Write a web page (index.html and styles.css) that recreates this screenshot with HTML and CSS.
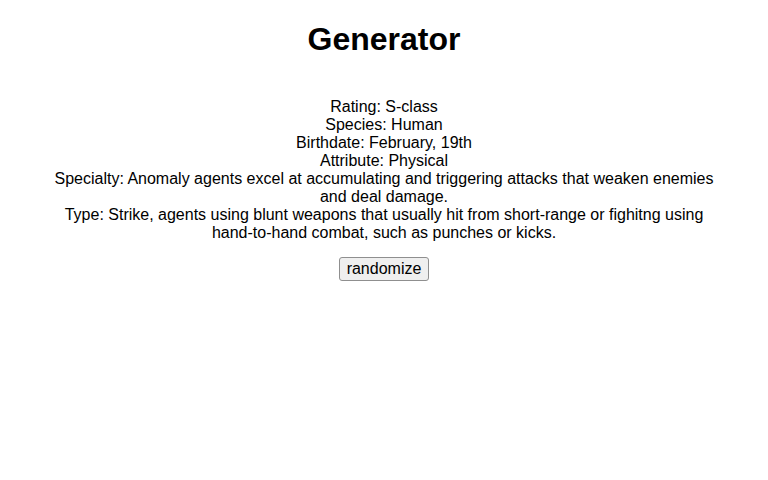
FILE: index.html
```html
<!DOCTYPE html>
<html lang="en">
<head>
    <meta charset="UTF-8">
    <meta name="viewport" content="width=device-width, initial-scale=1.0">
    <title>Generator</title>
    <link rel="stylesheet" href="styles.css">
</head>
<body>
    <h1 class="title">Generator</h1>

    <div class="agent-info">
        <div class="agent-line">Rating: S-class</div>
        <div class="agent-line">Species: Human</div>
        <div class="agent-line">Birthdate: February, 19th</div>
        <div class="agent-line">Attribute: Physical</div>
        <div class="agent-line">Specialty: Anomaly agents excel at accumulating and triggering attacks that weaken enemies and deal damage.</div>
        <div class="agent-line">Type: Strike, agents using blunt weapons that usually hit from short-range or fighitng using hand-to-hand combat, such as punches or kicks.</div>
    </div>

    <button class="randomize-btn" type="button">randomize</button>
</body>
</html>
```

FILE: styles.css
```css
html, body {
    margin: 0;
    padding: 0;
}
body {
    font-family: 'Liberation Sans', Arial, sans-serif;
    font-size: 16px;
    color: #000;
    background-color: #fff;
    text-align: center;
}
.title {
    font-size: 32px;
    font-weight: bold;
    margin: 21px 0 0;
}
.agent-info {
    margin: 40px auto 15px; /* space under the title */
    max-width: 672px;
}
.randomize-btn {
    font-family: 'Liberation Sans', Arial, sans-serif;
    font-size: 16px;
    padding: 2px 7px;
    color: #000;
    background-color: #efefef;
    border: 1px solid #8f8f8f;
    border-radius: 3px;
}
```
